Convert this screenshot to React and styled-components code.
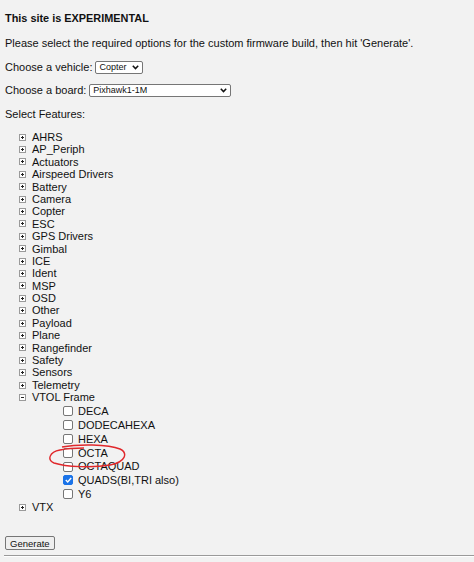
import * as React from "react"
import styled, { createGlobalStyle } from "styled-components"

const GlobalStyle = createGlobalStyle`
  html, body {
    margin: 0;
    padding: 0;
    background: #f2f2f2;
  }
  body {
    font-family: "Liberation Sans", Arial, sans-serif;
    color: #111;
  }
`

const Page = styled.div`
  position: relative;
  width: 474px;
  height: 562px;
  box-sizing: border-box;
  padding: 11px 0 0 5px;
  font-size: 11px;
  overflow: hidden;
`

const Title = styled.div`
  font-weight: bold;
  font-size: 10.9px;
  line-height: 14px;
`

const Para = styled.div`
  margin-top: ${(p) => p.gap || 10}px;
  line-height: 14px;
  display: flex;
  align-items: center;
  gap: 3px;
`

const Select = styled.div`
  display: inline-flex;
  align-items: center;
  justify-content: space-between;
  box-sizing: border-box;
  width: ${(p) => p.width}px;
  height: 13px;
  padding: 0 3px 0 3px;
  border: 1px solid #767676;
  border-radius: 2px;
  background: #fff;
  font-size: 9px;
  color: #111;
`

const Chevron = () => (
  <svg width="7" height="5" viewBox="0 0 7 5">
    <path d="M0.8 0.8 L3.5 3.6 L6.2 0.8" fill="none" stroke="#111" strokeWidth="1.5" />
  </svg>
)

const Tree = styled.ul`
  list-style: none;
  margin: 10px 0 0 0;
  padding: 0 0 0 14px;
  line-height: 12.4px;
`

const Node = styled.li`
  display: flex;
  align-items: center;
  gap: 4px;
  height: 12.4px;
`

const ToggleBox = styled.span`
  position: relative;
  width: 5px;
  height: 5px;
  border: 1px solid #9a9a9a;
  background: #fff;
  margin-right: 2px;
  flex: none;
  &::before {
    content: "";
    position: absolute;
    left: 1px;
    top: 2px;
    width: 3px;
    height: 1px;
    background: #222;
  }
  &::after {
    content: "";
    position: absolute;
    left: 2px;
    top: 1px;
    width: 1px;
    height: 3px;
    background: #222;
    display: ${(p) => (p.open ? "none" : "block")};
  }
`

const SubList = styled.ul`
  list-style: none;
  margin: 1px 0 0 0;
  padding: 0 0 0 44px;
`

const SubItem = styled.li`
  display: flex;
  align-items: center;
  gap: 5px;
  height: 13.8px;
`

const Box = styled.span`
  box-sizing: border-box;
  width: 10px;
  height: 10px;
  border: 1px solid #767676;
  border-radius: 2px;
  background: ${(p) => (p.checked ? "#1a73e8" : "#fff")};
  border-color: ${(p) => (p.checked ? "#1a73e8" : "#767676")};
  display: flex;
  align-items: center;
  justify-content: center;
  flex: none;
`

const Button = styled.div`
  display: inline-block;
  margin-top: 22px;
  padding: 0 4px;
  height: 14px;
  line-height: 13px;
  box-sizing: border-box;
  border: 1px solid #767676;
  border-radius: 2px;
  background: #efefef;
  font-size: 9.5px;
`

const Rule = styled.div`
  margin: 5px 0 0 -1px;
  height: 0;
  border-top: 1px solid #9a9a9a;
  border-bottom: 1px solid #fff;
`

const Scribble = styled.svg`
  position: absolute;
  left: 48px;
  top: 442px;
`

const features = [
  "AHRS",
  "AP_Periph",
  "Actuators",
  "Airspeed Drivers",
  "Battery",
  "Camera",
  "Copter",
  "ESC",
  "GPS Drivers",
  "Gimbal",
  "ICE",
  "Ident",
  "MSP",
  "OSD",
  "Other",
  "Payload",
  "Plane",
  "Rangefinder",
  "Safety",
  "Sensors",
  "Telemetry",
]

const frames = [
  { name: "DECA" },
  { name: "DODECAHEXA" },
  { name: "HEXA" },
  { name: "OCTA" },
  { name: "OCTAQUAD" },
  { name: "QUADS(BI,TRI also)", checked: true },
  { name: "Y6" },
]

const App = () => {
  return (
    <Page>
      <GlobalStyle />
      <Title>This site is EXPERIMENTAL</Title>
      <Para gap={11}>
        Please select the required options for the custom firmware build, then hit 'Generate'.
      </Para>
      <Para gap={10}>
        Choose a vehicle:
        <Select width={48}>
          Copter <Chevron />
        </Select>
      </Para>
      <Para gap={9}>
        Choose a board:
        <Select width={142}>
          Pixhawk1-1M <Chevron />
        </Select>
      </Para>
      <Para gap={10}>Select Features:</Para>
      <Tree>
        {features.map((f) => (
          <Node key={f}>
            <ToggleBox />
            {f}
          </Node>
        ))}
        <Node>
          <ToggleBox open />
          VTOL Frame
        </Node>
        <SubList>
          {frames.map((fr) => (
            <SubItem key={fr.name}>
              <Box checked={fr.checked}>
                {fr.checked && (
                  <svg width="7" height="6" viewBox="0 0 7 6">
                    <path d="M0.8 3 L2.7 4.9 L6.2 1" fill="none" stroke="#fff" strokeWidth="1.4" />
                  </svg>
                )}
              </Box>
              {fr.name}
            </SubItem>
          ))}
        </SubList>
        <Node>
          <ToggleBox />
          VTX
        </Node>
      </Tree>
      <Button>Generate</Button>
      <Rule />
      <Scribble width="80" height="28" viewBox="0 0 80 28">
        <path
          d="M14 5 C 30 2, 60 2, 72 7 C 80 11, 78 20, 62 23 C 45 26, 18 25, 6 21 C -1 18, 1 10, 12 8 C 22 6, 30 6, 36 6"
          fill="none"
          stroke="#e0282c"
          strokeWidth="1.4"
        />
      </Scribble>
    </Page>
  )
}

export default App
